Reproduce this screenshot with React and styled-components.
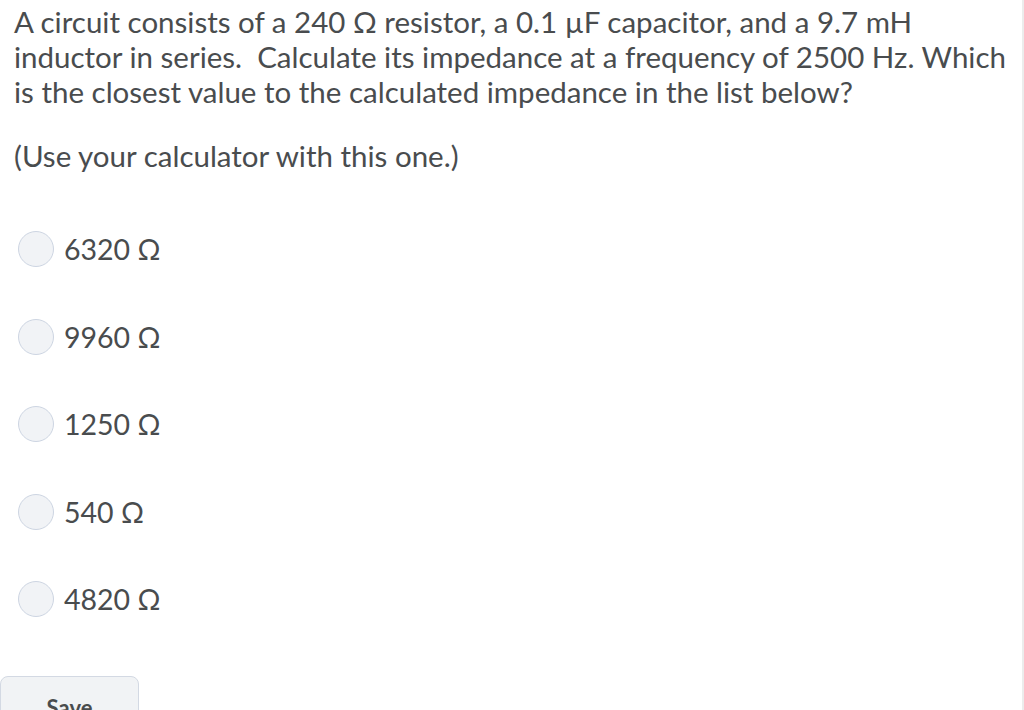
import React from "react";
import styled, { createGlobalStyle } from "styled-components";

const Global = createGlobalStyle`
  html, body { margin: 0; padding: 0; background: #fff; }
  body { font-family: Lato, "Noto Sans", sans-serif; color: #494c4e; }
`;

const Page = styled.div`
  position: relative;
  width: 1024px;
  height: 710px;
  overflow: hidden;
  box-sizing: border-box;
  border-right: 2px solid #ececec;
`;

const Question = styled.div`
  padding: 4px 10px 0 14px;
  font-size: 29.5px;
  line-height: 35px;
`;

const Para = styled.p`
  margin: 0 0 ${(p) => p.$gap || 0}px 0;
  white-space: nowrap;
`;

const Options = styled.div`
  display: flex;
  flex-direction: column;
  gap: 51.5px;
  padding: 58px 0 0 18px;
`;

const Option = styled.label`
  display: flex;
  align-items: center;
  gap: 10px;
  font-size: 28.5px;
  height: 36px;
`;

const Radio = styled.span`
  width: 36px;
  height: 36px;
  box-sizing: border-box;
  border-radius: 50%;
  border: 1px solid #cdd5e2;
  background: #f1f3f6;
  flex: none;
`;

const SaveButton = styled.button`
  margin-top: 59px;
  width: 139px;
  height: 56px;
  box-sizing: border-box;
  border: 1px solid #d3d9e3;
  border-radius: 8px;
  background: #f1f3f5;
  color: #494c4e;
  font-family: Lato, "Noto Sans", sans-serif;
  font-weight: 700;
  font-size: 22px;
  padding-top: 8px;
  display: block;
`;

const options = ["6320 Ω", "9960 Ω", "1250 Ω", "540 Ω", "4820 Ω"];

export default function App() {
  return (
    <Page>
      <Global />
      <Question>
        <Para $gap={29}>
          A circuit consists of a 240 Ω resistor, a 0.1 µF capacitor, and a 9.7 mH
          <br />
          inductor in series.&nbsp; Calculate its impedance at a frequency of 2500 Hz. Which
          <br />
          is the closest value to the calculated impedance in the list below?
        </Para>
        <Para>(Use your calculator with this one.)</Para>
      </Question>
      <Options>
        {options.map((o) => (
          <Option key={o}>
            <Radio />
            <span>{o}</span>
          </Option>
        ))}
      </Options>
      <SaveButton>Save</SaveButton>
    </Page>
  );
}
